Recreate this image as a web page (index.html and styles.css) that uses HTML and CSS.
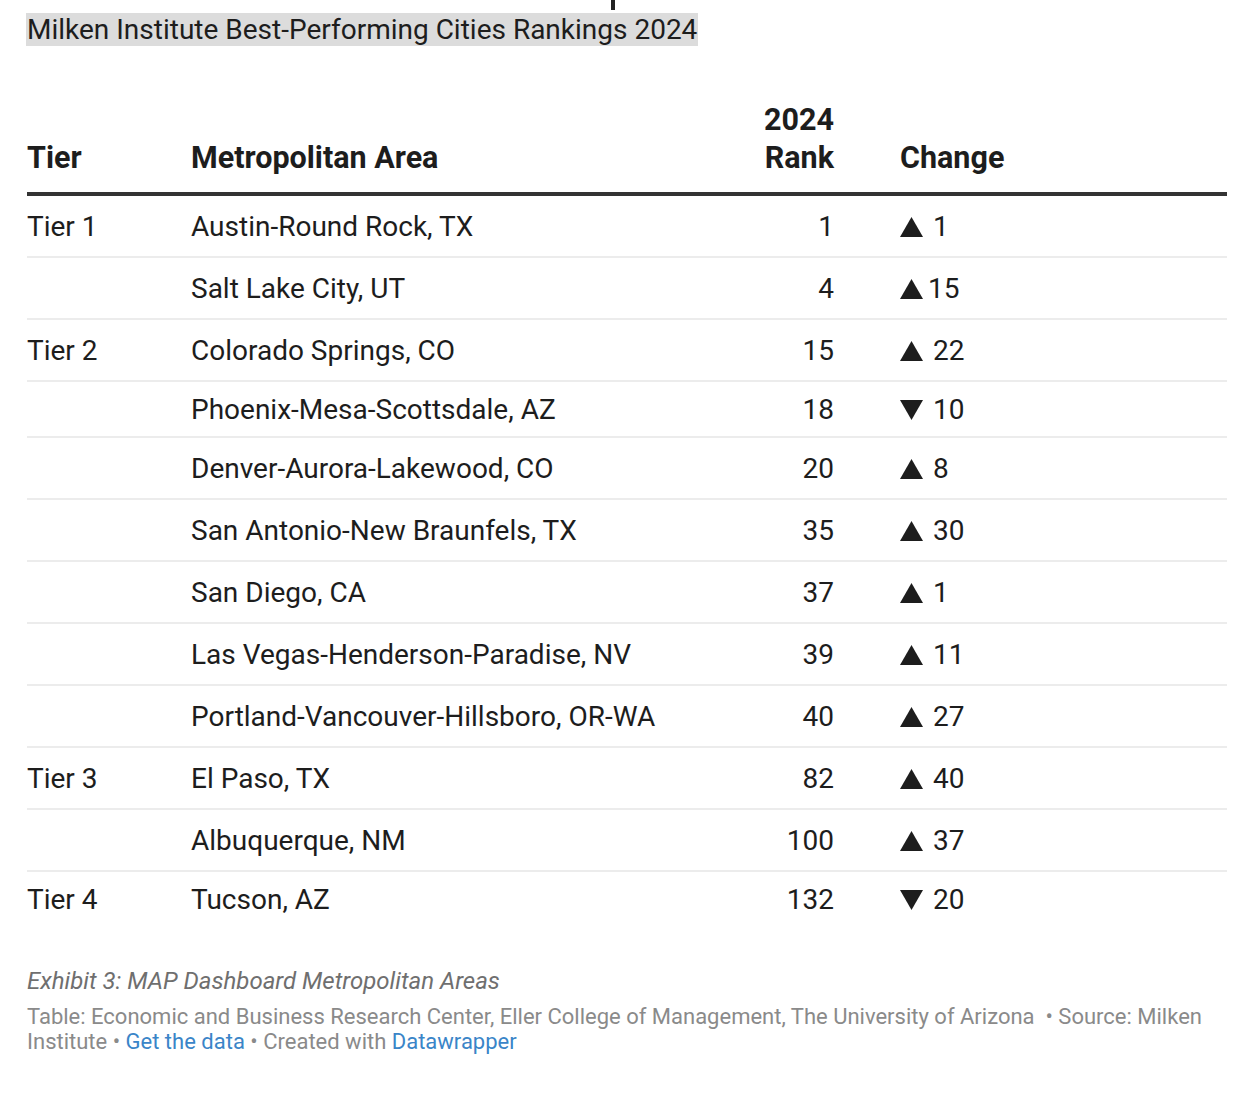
FILE: index.html
```html
<!DOCTYPE html>
<html lang="en">
<head>
<meta charset="utf-8">
<title>MAP Dashboard Metropolitan Areas</title>
<link rel="stylesheet" href="styles.css">
</head>
<body>
<div class="chart">
  <div class="title-tail"></div>
  <p class="subtitle"><span class="hl">Milken Institute Best-Performing Cities Rankings 2024</span></p>

  <table class="rank-table">
    <colgroup>
      <col class="c-tier">
      <col class="c-metro">
      <col class="c-rank">
      <col class="c-change">
    </colgroup>
    <thead>
      <tr>
        <th class="tier">Tier</th>
        <th class="metro">Metropolitan Area</th>
        <th class="rank">2024<br>Rank</th>
        <th class="change">Change</th>
      </tr>
    </thead>
    <tbody>
      <tr><td>Tier 1</td><td>Austin-Round Rock, TX</td><td class="rank">1</td><td class="change"><svg class="tri" viewBox="0 0 23 20"><polygon points="11.5,0 23,20 0,20"/></svg> 1</td></tr>
      <tr><td></td><td>Salt Lake City, UT</td><td class="rank">4</td><td class="change"><svg class="tri tight" viewBox="0 0 23 20"><polygon points="11.5,0 23,20 0,20"/></svg>15</td></tr>
      <tr><td>Tier 2</td><td>Colorado Springs, CO</td><td class="rank">15</td><td class="change"><svg class="tri" viewBox="0 0 23 20"><polygon points="11.5,0 23,20 0,20"/></svg> 22</td></tr>
      <tr class="dn"><td></td><td>Phoenix-Mesa-Scottsdale, AZ</td><td class="rank">18</td><td class="change"><svg class="tri" viewBox="0 0 23 20"><polygon points="0,0 23,0 11.5,20"/></svg> 10</td></tr>
      <tr><td></td><td>Denver-Aurora-Lakewood, CO</td><td class="rank">20</td><td class="change"><svg class="tri" viewBox="0 0 23 20"><polygon points="11.5,0 23,20 0,20"/></svg> 8</td></tr>
      <tr><td></td><td>San Antonio-New Braunfels, TX</td><td class="rank">35</td><td class="change"><svg class="tri" viewBox="0 0 23 20"><polygon points="11.5,0 23,20 0,20"/></svg> 30</td></tr>
      <tr><td></td><td>San Diego, CA</td><td class="rank">37</td><td class="change"><svg class="tri" viewBox="0 0 23 20"><polygon points="11.5,0 23,20 0,20"/></svg> 1</td></tr>
      <tr><td></td><td>Las Vegas-Henderson-Paradise, NV</td><td class="rank">39</td><td class="change"><svg class="tri" viewBox="0 0 23 20"><polygon points="11.5,0 23,20 0,20"/></svg> 11</td></tr>
      <tr><td></td><td>Portland-Vancouver-Hillsboro, OR-WA</td><td class="rank">40</td><td class="change"><svg class="tri" viewBox="0 0 23 20"><polygon points="11.5,0 23,20 0,20"/></svg> 27</td></tr>
      <tr><td>Tier 3</td><td>El Paso, TX</td><td class="rank">82</td><td class="change"><svg class="tri" viewBox="0 0 23 20"><polygon points="11.5,0 23,20 0,20"/></svg> 40</td></tr>
      <tr><td></td><td>Albuquerque, NM</td><td class="rank">100</td><td class="change"><svg class="tri" viewBox="0 0 23 20"><polygon points="11.5,0 23,20 0,20"/></svg> 37</td></tr>
      <tr class="dn"><td>Tier 4</td><td>Tucson, AZ</td><td class="rank">132</td><td class="change"><svg class="tri" viewBox="0 0 23 20"><polygon points="0,0 23,0 11.5,20"/></svg> 20</td></tr>
    </tbody>
  </table>

  <p class="notes">Exhibit 3: MAP Dashboard Metropolitan Areas</p>
  <p class="footer">Table: Economic and Business Research Center, Eller College of Management, The University of Arizona &nbsp;• Source: Milken Institute • <a href="#">Get the data</a> • Created with <a href="#">Datawrapper</a></p>
</div>
</body>
</html>
```

FILE: styles.css
```css
html, body {
  margin: 0;
  padding: 0;
  background: #ffffff;
}

body {
  font-family: Roboto, "Liberation Sans", Arial, sans-serif;
  color: #1d1d1d;
}

.chart {
  padding: 0 15px 0 27px;
}

.title-tail {
  width: 4px;
  height: 10px;
  margin-left: 584px;
  background: #222222;
}

.subtitle {
  margin: 3px 0 0 -1px;
  font-size: 28px;
  line-height: 33px;
  color: #1d1d1d;
}

.subtitle .hl {
  background: #dcdcdc;
  padding: 0 1px;
}

.rank-table {
  width: 100%;
  margin-top: 55px;
  border-collapse: collapse;
  table-layout: fixed;
  font-size: 28px;
  line-height: 38px;
}

.c-tier { width: 164px; }
.c-rank { width: 121px; }
.c-change { width: 393px; }

.rank-table th {
  font-size: 30.5px;
  font-weight: 700;
  text-align: left;
  vertical-align: bottom;
  padding: 0 0 15px 0;
  border-bottom: 4px solid #333333;
}

.rank-table th.rank,
.rank-table td.rank {
  text-align: right;
}

.rank-table th.change,
.rank-table td.change {
  padding-left: 66px;
}

.rank-table td {
  padding: 12px 0 10px 0;
  border-bottom: 2px solid #ececec;
  vertical-align: top;
  white-space: nowrap;
}

.rank-table tr.dn td {
  padding: 9px 0 7px 0;
}

.rank-table tr.dn td.change {
  padding-left: 66px;
}

.rank-table tbody tr:last-child td {
  border-bottom: none;
}

.tri {
  width: 23px;
  height: 20px;
  fill: #1d1d1d;
  vertical-align: -1px;
  margin-right: 3px;
}

.tri.tight {
  margin-right: 5px;
}

.notes {
  margin: 41px 0 0 0;
  font-size: 24px;
  line-height: 28px;
  font-style: italic;
  color: #6f6f6f;
}

.footer {
  margin: 9px 0 0 0;
  font-size: 22px;
  line-height: 25px;
  color: #8a8a8a;
  padding-right: 10px;
}

.footer a {
  color: #3a85c8;
  text-decoration: none;
}
```
